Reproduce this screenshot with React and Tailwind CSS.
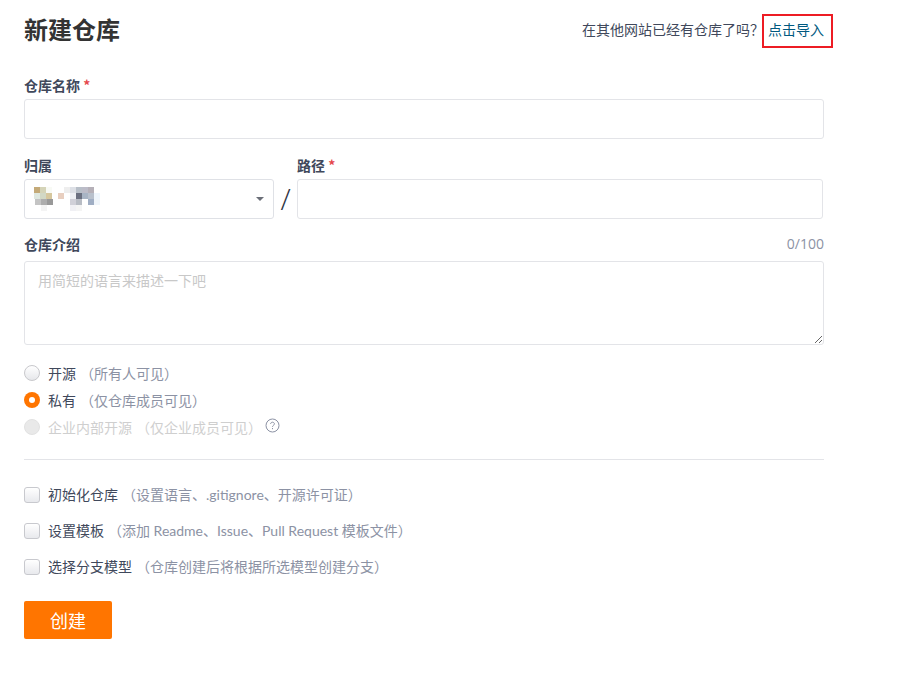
const pixels = [
  [0,0,'#c4aa78'],[6,0,'#d5d4b8'],[12,0,'#f8faf5'],
  [0,6,'#dfe8e0'],[6,6,'#d2d8c5'],[12,6,'#d6c79e'],
  [1,12,'#c4c4c4'],[7,12,'#adadad'],[13,12,'#999999'],
  [7,18,'#f4f4f4'],
  [24,6,'#e8cfc0'],
  [30,0,'#eeeeee'],[36,0,'#dde0e6'],[42,0,'#b8bfc8'],[48,0,'#bcbcc8'],[54,0,'#b5b0b8'],
  [36,6,'#eef0f4'],[42,6,'#6b7080'],[48,6,'#a8b4c4'],[54,6,'#b8c0cc'],[60,6,'#eef5fc'],
  [36,12,'#d0d0d8'],[42,12,'#b8bcc4'],[54,12,'#a0aec4'],[60,12,'#f0f5fa'],
  [36,18,'#f0f0f4'],[42,18,'#f4f4f4'],
];

function Radio({ state, label, hint, extra }) {
  const on = state === 'on', off = state === 'disabled';
  return (
    <div className="flex items-center h-[27px]">
      {on ? (
        <span className="w-4 h-4 rounded-full bg-[#ff7500] flex items-center justify-center">
          <span className="w-[6px] h-[6px] rounded-full bg-white" />
        </span>
      ) : off ? (
        <span className="w-4 h-4 rounded-full bg-[#e9e9e9] border border-[#e2e2e2]" />
      ) : (
        <span className="w-4 h-4 rounded-full border border-[#c8c8cc] bg-gradient-to-b from-white to-[#e6e7ea]" />
      )}
      <span className={`ml-2 ${off ? 'text-[#cfcfcf]' : 'text-[#40485b]'}`}>{label}</span>
      <span className={`ml-1 ${off ? 'text-[#cfcfcf]' : 'text-[#8c92a4]'}`}>{hint}</span>
      {extra}
    </div>
  );
}

function Check({ label, hint }) {
  return (
    <div className="flex items-center h-[16px]">
      <span className="w-4 h-4 rounded-[3px] border border-[#c8c9ce] bg-gradient-to-b from-white to-[#e8e9ed]" />
      <span className="ml-2 pb-[2px] text-[#40485b]">{label}</span>
      <span className="ml-1 text-[#8c92a4] font-['Lato','Noto_Sans_CJK_SC',sans-serif]">{hint}</span>
    </div>
  );
}

export default function App() {
  return (
    <div className="w-[897px] h-[677px] bg-white pl-6 text-[14px] leading-[18px] font-['Microsoft_YaHei','Noto_Sans_CJK_SC',sans-serif]">
      <div className="w-[800px]">
        <div className="h-[62px] pt-[13px] flex items-start justify-between">
          <h1 className="text-[24px] leading-[32px] font-bold text-[#333333]">新建仓库</h1>
          <div className="flex items-center h-[34px] mt-[1px] -mr-[9px]">
            <span className="pb-1 text-[#40485b]">在其他网站已经有仓库了吗？</span>
            <span className="-ml-[2px] h-[34px] w-[71px] border-2 border-[#ed1c24] flex items-center justify-start pl-1 pb-1 text-[#005980]">点击导入</span>
          </div>
        </div>

        <div className="mt-[14px] h-[19px] font-bold text-[#40485b]">仓库名称 <span className="text-[#e5484d]">*</span></div>
        <input className="block mt-[4px] w-full h-10 rounded-[3px] border border-[#e3e4e8] outline-none" />

        <div className="mt-[17px] flex items-start">
          <div className="w-[250px]">
            <div className="h-[19px] font-bold text-[#40485b]">归属</div>
            <div className="mt-[4px] h-10 rounded-[3px] border border-[#dfe1e6] flex items-center justify-between pl-[9px] pr-[9px]">
              <svg width="66" height="24" viewBox="0 0 66 24">
                {pixels.map(([x, y, c]) => <rect key={`${x}-${y}`} x={x} y={y} width="6" height="6" fill={c} />)}
              </svg>
              <span className="w-0 h-0 border-x-[4px] border-x-transparent border-t-[4px] border-t-[#6b6f78]" />
            </div>
          </div>
          <div className="w-[23px] mt-[23px] h-10 flex items-center justify-center text-[30px] font-light text-[#2f3545] font-['Open_Sans',sans-serif]">/</div>
          <div className="flex-1 min-w-0 pr-px">
            <div className="h-[19px] font-bold text-[#40485b]">路径 <span className="text-[#e5484d]">*</span></div>
            <input className="block mt-[4px] w-full h-10 rounded-[3px] border border-[#e3e4e8] outline-none" />
          </div>
        </div>

        <div className="mt-[16px] flex justify-between h-[19px]">
          <span className="font-bold text-[#40485b]">仓库介绍</span>
          <span className="text-[#8c92a4] font-['Open_Sans',sans-serif]">0/100</span>
        </div>
        <textarea
          placeholder="用简短的语言来描述一下吧"
          className="block mt-[7px] w-full h-[84px] rounded-[3px] border border-[#e3e4e8] px-[13px] py-[9px] outline-none placeholder:text-[#c8c8c8]"
        />

        <div className="mt-[14px]">
          <Radio label="开源" hint="（所有人可见）" />
          <Radio state="on" label="私有" hint="（仅仓库成员可见）" />
          <Radio
            state="disabled"
            label="企业内部开源"
            hint="（仅企业成员可见）"
            extra={
              <svg className="ml-[3px] -mt-[3px]" width="15" height="15" viewBox="0 0 15 15" fill="none" stroke="#8c92a4">
                <circle cx="7.5" cy="7.5" r="6.5" />
                <path d="M5.6 6c0-1.1.9-1.8 1.9-1.8s1.9.7 1.9 1.7c0 1.4-1.9 1.5-1.9 2.9" />
                <path d="M7.5 10v1.2" />
              </svg>
            }
          />
        </div>

        <hr className="mt-[19px] border-t border-[#e3e4e8]" />

        <div className="mt-[27px] flex flex-col gap-[20px]">
          <Check label="初始化仓库" hint="（设置语言、.gitignore、开源许可证）" />
          <Check label="设置模板" hint="（添加 Readme、Issue、Pull Request 模板文件）" />
          <Check label="选择分支模型" hint="（仓库创建后将根据所选模型创建分支）" />
        </div>

        <button className="block mt-[26px] w-[88px] h-[38px] rounded-[2px] bg-[#ff7500] text-white text-[18px]">创建</button>
      </div>
    </div>
  );
}
